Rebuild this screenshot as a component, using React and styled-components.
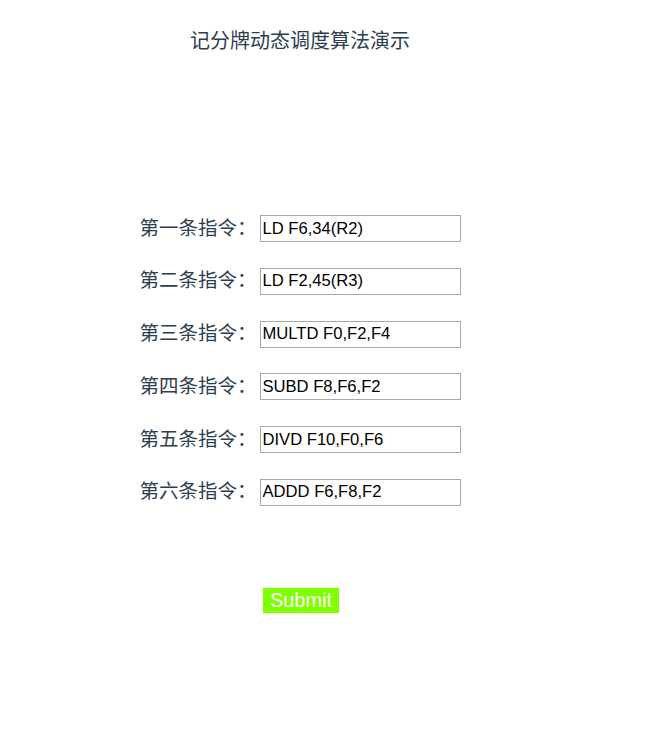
import React, { useState } from "react";
import styled, { createGlobalStyle } from "styled-components";

const GlobalStyle = createGlobalStyle`
  body {
    margin: 0;
    background: #ffffff;
    font-family: "Liberation Sans", "Noto Sans CJK SC", sans-serif;
  }
`;

const Page = styled.div`
  width: 600px;
  display: flex;
  flex-direction: column;
  align-items: center;
  color: #2c3e50;
`;

const Title = styled.h3`
  margin: 26px 0 0 0;
  font-family: "Noto Sans CJK SC", sans-serif;
  font-size: 20px;
  font-weight: 400;
  line-height: 28px;
`;

const Form = styled.form`
  margin-top: 161px;
  display: flex;
  flex-direction: column;
  align-items: center;
  gap: 25.8px;
`;

const Row = styled.div`
  display: flex;
  align-items: center;
  height: 27px;
`;

const Label = styled.label`
  width: 120px;
  padding-bottom: 5px;
  font-family: "Noto Sans CJK SC", sans-serif;
  font-size: 19.5px;
  line-height: 27px;
  color: #2c3e50;
`;

const Input = styled.input`
  box-sizing: border-box;
  width: 201px;
  height: 27px;
  padding: 1px 2px;
  border: 1px solid #a9a9a9;
  font-family: "Liberation Sans", sans-serif;
  font-size: 16.6px;
  color: #000000;
  outline: none;
`;

const SubmitButton = styled.button`
  margin-top: 56px;
  margin-left: 2px;
  height: 25px;
  padding: 0 7px;
  border: none;
  background: #7fff00;
  color: #ffffff;
  font-family: "Liberation Sans", sans-serif;
  font-size: 20px;
  line-height: 25px;
  cursor: pointer;
`;

const labels = ["第一条指令：", "第二条指令：", "第三条指令：", "第四条指令：", "第五条指令：", "第六条指令："];

export default function App() {
  const [instructions, setInstructions] = useState([
    "LD F6,34(R2)",
    "LD F2,45(R3)",
    "MULTD F0,F2,F4",
    "SUBD F8,F6,F2",
    "DIVD F10,F0,F6",
    "ADDD F6,F8,F2",
  ]);

  const update = (i, value) => {
    const next = instructions.slice();
    next[i] = value;
    setInstructions(next);
  };

  return (
    <Page>
      <GlobalStyle />
      <Title>记分牌动态调度算法演示</Title>
      <Form onSubmit={(e) => e.preventDefault()}>
        {labels.map((label, i) => (
          <Row key={label}>
            <Label>{label}</Label>
            <Input value={instructions[i]} onChange={(e) => update(i, e.target.value)} />
          </Row>
        ))}
        <SubmitButton type="submit">Submit</SubmitButton>
      </Form>
    </Page>
  );
}
